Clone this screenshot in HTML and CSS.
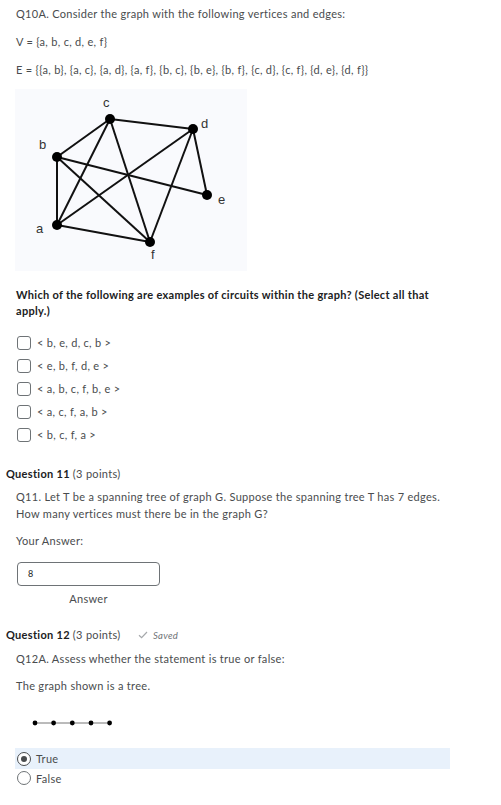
FILE: index.html
```html
<!DOCTYPE html>
<html lang="en">
<head>
    <meta charset="UTF-8">
    <meta name="viewport" content="width=device-width, initial-scale=1.0">
    <title>Quiz - Graph Theory</title>
    <link rel="stylesheet" href="styles.css">
</head>
<body>
    <div class="page">
        <div class="question-body">
            <p>Q10A. Consider the graph with the following vertices and edges:</p>
            <p>V = {a, b, c, d, e, f}</p>
            <p>E = {{a, b}, {a, c}, {a, d}, {a, f}, {b, c}, {b, e}, {b, f}, {c, d}, {c, f}, {d, e}, {d, f}}</p>
            <div class="graph-image">
                <svg width="232" height="182" viewBox="0 0 232 182">
                    <g stroke="#111" stroke-width="2">
                        <line x1="42" y1="136" x2="42" y2="68"/>
                        <line x1="42" y1="136" x2="95" y2="30"/>
                        <line x1="42" y1="136" x2="178" y2="40"/>
                        <line x1="42" y1="136" x2="135" y2="153"/>
                        <line x1="42" y1="68" x2="95" y2="30"/>
                        <line x1="42" y1="68" x2="192" y2="106"/>
                        <line x1="42" y1="68" x2="135" y2="153"/>
                        <line x1="95" y1="30" x2="178" y2="40"/>
                        <line x1="95" y1="30" x2="135" y2="153"/>
                        <line x1="178" y1="40" x2="192" y2="106"/>
                        <line x1="178" y1="40" x2="135" y2="153"/>
                    </g>
                    <g fill="#000">
                        <circle cx="42" cy="136" r="5"/>
                        <circle cx="42" cy="68" r="5"/>
                        <circle cx="95" cy="30" r="5"/>
                        <circle cx="178" cy="40" r="5"/>
                        <circle cx="192" cy="106" r="5"/>
                        <circle cx="135" cy="153" r="5"/>
                    </g>
                    <g class="graph-label">
                        <text x="88" y="18">c</text>
                        <text x="186" y="39">d</text>
                        <text x="24" y="60">b</text>
                        <text x="203" y="115">e</text>
                        <text x="21" y="144">a</text>
                        <text x="136" y="170">f</text>
                    </g>
                </svg>
            </div>
            <p class="prompt">Which of the following are examples of circuits within the graph? (Select all that apply.)</p>
            <div class="choices">
                <label class="choice"><span class="checkbox"></span>&lt; b, e, d, c, b &gt;</label>
                <label class="choice"><span class="checkbox"></span>&lt; e, b, f, d, e &gt;</label>
                <label class="choice"><span class="checkbox"></span>&lt; a, b, c, f, b, e &gt;</label>
                <label class="choice"><span class="checkbox"></span>&lt; a, c, f, a, b &gt;</label>
                <label class="choice"><span class="checkbox"></span>&lt; b, c, f, a &gt;</label>
            </div>
        </div>

        <h2 class="question-title q11">Question 11 <span class="points">(3 points)</span></h2>
        <div class="question-body">
            <p class="tight">Q11. Let T be a spanning tree of graph G. Suppose the spanning tree T has 7 edges. How many vertices must there be in the graph G?</p>
            <p>Your Answer:</p>
            <div class="answer-field">
                <div class="answer-box">8</div>
                <div class="answer-label">Answer</div>
            </div>
        </div>

        <h2 class="question-title q12">Question 12 <span class="points">(3 points)</span>
            <span class="saved">
                <svg width="10" height="8" viewBox="0 0 10 8"><path d="M1 4.2 L3.6 6.6 L9 1" fill="none" stroke="#a5a8ab" stroke-width="1.2"/></svg>
                Saved
            </span>
        </h2>
        <div class="question-body">
            <p class="tight">Q12A. Assess whether the statement is true or false:</p>
            <p>The graph shown is a tree.</p>
            <div class="path-graph">
                <svg width="80" height="10" viewBox="0 0 80 10">
                    <line x1="3" y1="5" x2="77" y2="5" stroke="#777" stroke-width="1"/>
                    <g fill="#000">
                        <circle cx="3" cy="5" r="2.4"/>
                        <circle cx="21.6" cy="5" r="2.4"/>
                        <circle cx="40.3" cy="5" r="2.4"/>
                        <circle cx="59" cy="5" r="2.4"/>
                        <circle cx="77.6" cy="5" r="2.4"/>
                    </g>
                </svg>
            </div>
        </div>
        <div class="options">
            <label class="option selected"><span class="radio checked"></span>True</label>
            <label class="option"><span class="radio"></span>False</label>
        </div>
    </div>
</body>
</html>
```

FILE: styles.css
```css
body {
    margin: 0;
    background-color: #fff;
    font-family: Lato, "Noto Sans", sans-serif;
    font-size: 11px;
    letter-spacing: 0.3px;
    color: #494c4e;
}
.page {
    width: 444px;
    padding: 5px 0 20px 6px;
}
.question-body {
    margin-left: 10px;
}
.question-body p {
    margin: 0 0 11px;
    line-height: 17px;
}
.question-body p.tight {
    margin-bottom: 10px;
}
.graph-image {
    width: 232px;
    height: 182px;
    margin: 8px 0 0 -1px;
    background-color: #f9fafd;
}
.graph-image svg {
    display: block;
}
.graph-label {
    font-family: "Liberation Sans", Arial, sans-serif;
    font-size: 13px;
    letter-spacing: 0;
    fill: #333;
}
.question-body p.prompt {
    margin: 16px 0 12px;
    line-height: 16px;
    font-weight: bold;
    color: #202122;
}
.choices {
    display: flex;
    flex-direction: column;
}
.choice {
    display: flex;
    align-items: center;
    height: 23px;
    gap: 6px;
}
.checkbox {
    width: 12px;
    height: 12px;
    margin-left: 1px;
    border: 1px solid #6e7376;
    border-radius: 3px;
    background-color: #fff;
}
.question-title {
    margin: 0;
    font-size: 11px;
    line-height: 17px;
    font-weight: bold;
    color: #202122;
}
.question-title .points {
    font-weight: normal;
    color: #494c4e;
}
.q11 {
    margin-top: 19px;
    margin-bottom: 6px;
}
.q12 {
    margin-top: 19px;
    margin-bottom: 6px;
}
.saved {
    margin-left: 15px;
    font-size: 9.5px;
    font-weight: normal;
    font-style: italic;
    color: #6e7376;
}
.saved svg {
    margin-right: 2px;
}
.answer-field {
    width: 143px;
    margin-top: 13px;
    margin-left: 1px;
}
.answer-box {
    height: 22px;
    padding-left: 10px;
    border: 1px solid #6e7376;
    border-radius: 4px;
    font-size: 9px;
    line-height: 22px;
    color: #202122;
}
.answer-label {
    margin-top: 4px;
    text-align: center;
    line-height: 17px;
}
.path-graph {
    margin-top: 24px;
    margin-left: 16px;
}
.path-graph svg {
    display: block;
}
.options {
    margin-top: 20px;
    margin-left: 9px;
}
.option {
    display: flex;
    align-items: center;
    gap: 5px;
    height: 21px;
    padding-left: 2px;
}
.option + .option {
    height: 18px;
}
.option.selected {
    background-color: #e8f1fb;
}
.radio {
    width: 12px;
    height: 12px;
    border: 1px solid #6e7376;
    border-radius: 50%;
    background-color: #fff;
    display: flex;
    align-items: center;
    justify-content: center;
}
.radio.checked {
    border-color: #494c4e;
}
.radio.checked::after {
    content: "";
    width: 6px;
    height: 6px;
    border-radius: 50%;
    background-color: #494c4e;
}
```
